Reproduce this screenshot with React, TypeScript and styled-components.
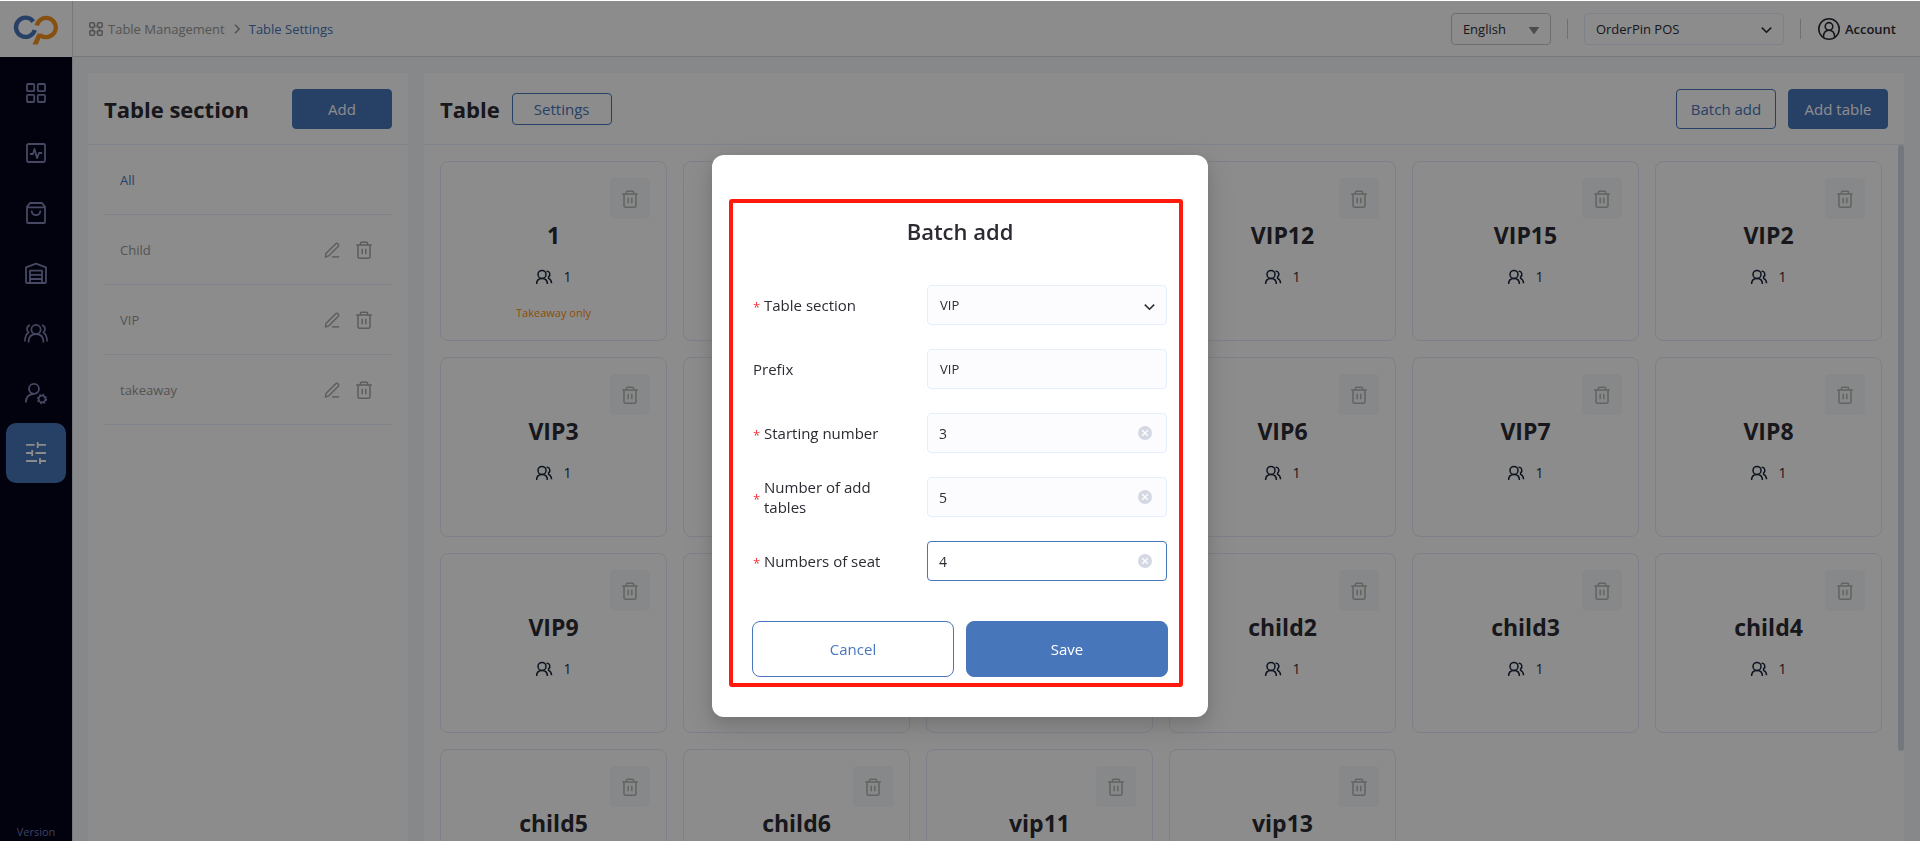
import React, { useState } from 'react';
import styled, { createGlobalStyle, css } from 'styled-components';

const color = {
  primary: '#4876bb',
  text: '#2b2b33',
  muted: '#999999',
  line: '#e6edfb',
  page: '#f5f7fa',
};

const GlobalStyle = createGlobalStyle`
  *, *::before, *::after { box-sizing: border-box; }
  body {
    margin: 0;
    overflow: hidden;
    font-family: "Open Sans", "Noto Sans", sans-serif;
    font-size: 13px;
    line-height: 20px;
    color: ${color.text};
    background: #fff;
  }
  button, input, select { font: inherit; color: inherit; margin: 0; }
  button { cursor: pointer; }
  svg { display: block; flex: none; }
  h1, h2, h3, p, ul { margin: 0; padding: 0; }
`;

/* ---------- Shell ---------- */

const Shell = styled.div`
  display: flex;
  height: 100vh;
  border-top: 1px solid #fff;
`;

const Sidebar = styled.nav`
  width: 72px;
  flex: none;
  display: flex;
  flex-direction: column;
  align-items: center;
  background: #04031a;
`;

const LogoBox = styled.a`
  width: 100%;
  height: 56px;
  display: flex;
  justify-content: center;
  padding-top: 14px;
  background: #fff;
  margin-bottom: 6px;
`;

const NavItem = styled.a<{ $active?: boolean }>`
  width: 60px;
  height: 60px;
  flex: none;
  display: flex;
  align-items: center;
  justify-content: center;
  border-radius: 10px;
  color: ${(p) => (p.$active ? '#fff' : '#8184b4')};
  background: ${(p) => (p.$active ? color.primary : 'transparent')};
`;

const Version = styled.span`
  margin-top: auto;
  font-size: 11px;
  line-height: 18px;
  color: #7077b0;
`;

const Body = styled.div`
  flex: 1;
  min-width: 0;
  display: flex;
  flex-direction: column;
  border-left: 1px solid #d5dae3;
  background: ${color.page};
`;

const Header = styled.header`
  height: 56px;
  flex: none;
  display: flex;
  align-items: center;
  justify-content: space-between;
  padding: 0 24px 0 15px;
  background: #fff;
  border-bottom: 1px solid #d5dae3;
`;

const Crumbs = styled.div`
  display: flex;
  align-items: center;
  gap: 4px;
  color: ${color.muted};
`;

const CrumbLink = styled.a<{ $current?: boolean }>`
  text-decoration: none;
  color: ${(p) => (p.$current ? color.primary : color.muted)};
`;

const HeaderTools = styled.div`
  display: flex;
  align-items: center;
  gap: 16px;
`;

const Separator = styled.span`
  width: 1px;
  height: 20px;
  background: #c9cdd6;
`;

const SelectWrap = styled.div<{ $width: number }>`
  width: ${(p) => p.$width}px;
  display: grid;
  align-items: center;
  > * { grid-area: 1 / 1; }
  > svg { justify-self: end; margin: 3px 12px 0 0; pointer-events: none; }
`;

const boxStyle = css`
  width: 100%;
  min-width: 0;
  border: 1px solid ${color.line};
  border-radius: 4px;
  padding: 0 12px;
  outline: none;
  appearance: none;
`;

const HeaderSelect = styled.select<{ $strong?: boolean }>`
  ${boxStyle}
  height: 32px;
  background: #fff;
  padding: 0 11px;
  border-color: ${(p) => (p.$strong ? '#c9c9cf' : color.line)};
`;

const AccountButton = styled.button`
  display: flex;
  align-items: center;
  gap: 4px;
  padding: 0;
  border: 0;
  background: none;
  font-weight: 600;
`;

/* ---------- Panels ---------- */

const Content = styled.main`
  flex: 1;
  min-height: 0;
  display: flex;
  gap: 16px;
  padding: 16px 16px 0 15px;
`;

const Panel = styled.section<{ $width?: number }>`
  ${(p) => (p.$width ? `flex: 0 0 ${p.$width}px;` : 'flex: 1; min-width: 0;')}
  display: flex;
  flex-direction: column;
  background: #fff;
`;

const PanelHead = styled.div`
  height: 72px;
  flex: none;
  display: flex;
  align-items: center;
  justify-content: space-between;
  gap: 12px;
  padding: 0 16px;
  border-bottom: 1px solid ${color.line};
`;

const PanelTitle = styled.h2`
  font-size: 22px;
  line-height: 32px;
  font-weight: 700;
`;

const Group = styled.div`
  display: flex;
  align-items: center;
  gap: 12px;
`;

const Button = styled.button<{ $outline?: boolean; $short?: boolean }>`
  width: 100px;
  height: ${(p) => (p.$short ? 32 : 40)}px;
  padding: 0;
  border: 1px solid ${color.primary};
  border-radius: 4px;
  font-size: 15px;
  white-space: nowrap;
  color: ${(p) => (p.$outline ? color.primary : '#fff')};
  background: ${(p) => (p.$outline ? '#fff' : color.primary)};
`;

const SectionList = styled.ul`
  list-style: none;
  padding: 0 16px;
`;

const SectionRow = styled.li<{ $active?: boolean }>`
  height: 70px;
  display: flex;
  align-items: center;
  padding: 0 19px 0 16px;
  border-bottom: 1px solid ${color.line};
  color: ${(p) => (p.$active ? color.primary : color.muted)};
`;

const SectionName = styled.span`
  flex: 1;
`;

const RowActions = styled.div`
  display: flex;
  align-items: center;
  gap: 15px;
`;

const IconButton = styled.button`
  display: flex;
  padding: 0;
  border: 0;
  background: none;
  color: #a8a8a8;
`;

const CardArea = styled.div`
  flex: 1;
  min-height: 0;
  display: flex;
`;

const CardScroll = styled.div`
  flex: 1;
  min-width: 0;
  overflow-y: auto;
  scrollbar-width: none;
  padding: 16px;
`;

const ScrollTrack = styled.div`
  width: 6px;
  flex: none;
`;

const ScrollThumb = styled.div`
  height: 87%;
  border-radius: 3px;
  background: #d3d9e3;
`;

const CardGrid = styled.div`
  display: grid;
  grid-template-columns: repeat(6, 1fr);
  gap: 16px;
`;

const Card = styled.article`
  height: 180px;
  display: flex;
  flex-direction: column;
  align-items: center;
  padding: 16px;
  border: 1px solid #e6e8f8;
  border-radius: 8px;
`;

const CardDelete = styled.button`
  align-self: flex-end;
  width: 40px;
  height: 41px;
  display: flex;
  align-items: center;
  justify-content: center;
  padding: 0;
  border: 0;
  border-radius: 4px;
  background: ${color.page};
  color: #b4b4b0;
`;

const CardName = styled.h3`
  font-size: 23px;
  line-height: 32px;
  font-weight: 700;
  margin-bottom: 16px;
`;

const Seats = styled.div`
  display: flex;
  align-items: center;
  gap: 10px;
  font-size: 14px;
  margin-bottom: 16px;
`;

const Note = styled.p`
  font-size: 11px;
  line-height: 20px;
  color: #ff8f0a;
`;

/* ---------- Dialog ---------- */

const Overlay = styled.div`
  position: fixed;
  inset: 1px 0 0 0;
  display: flex;
  align-items: flex-start;
  justify-content: center;
  padding-top: 154px;
  background: rgba(0, 0, 0, 0.45);
`;

const Dialog = styled.form`
  position: relative;
  width: 496px;
  padding: 60px 40px 40px;
  border-radius: 12px;
  background: #fff;
  box-shadow: 0 6px 16px rgba(0, 0, 0, 0.12), 0 9px 28px 8px rgba(0, 0, 0, 0.08);
`;

const Highlight = styled.div`
  position: absolute;
  inset: 44px 25px 30px 17px;
  border: 4px solid #ff1a0d;
  border-radius: 3px;
  pointer-events: none;
`;

const DialogTitle = styled.h1`
  font-size: 22px;
  line-height: 32px;
  font-weight: 600;
  text-align: center;
  margin-bottom: 38px;
`;

const Fields = styled.div`
  display: flex;
  flex-direction: column;
  gap: 24px;
  padding: 0 1px;
  margin-bottom: 40px;
`;

const Field = styled.div`
  display: flex;
  align-items: center;
  justify-content: space-between;
  height: 40px;
`;

const FieldLabel = styled.label`
  width: 136px;
  display: flex;
  align-items: center;
  gap: 5px;
  font-size: 15px;
`;

const Star = styled.span`
  width: 6px;
  font-size: 13px;
  line-height: 16px;
  padding-top: 3px;
  color: #f5303a;
`;

const FieldSelect = styled.select`
  ${boxStyle}
  height: 40px;
  background: #fcfcfe;
`;

const FieldInput = styled.input<{ $focused?: boolean; $number?: boolean }>`
  ${boxStyle}
  height: 40px;
  ${(p) => p.$number && 'padding: 0 11px; font-size: 14px;'}
  background: ${(p) => (p.$focused ? '#fff' : '#fcfcfe')};
  border-color: ${(p) => (p.$focused ? color.primary : color.line)};
`;

const InputWrap = styled.div`
  width: 240px;
  display: grid;
  align-items: center;
  > * { grid-area: 1 / 1; }
`;

const ClearButton = styled.button`
  justify-self: end;
  display: flex;
  margin-right: 15px;
  padding: 0;
  border: 0;
  background: none;
`;

const DialogActions = styled.div`
  display: flex;
  gap: 12px;
`;

const DialogButton = styled(Button)`
  flex: 1;
  height: 56px;
  border-radius: 8px;
`;

/* ---------- Icons ---------- */

const Line: React.FC<{ size?: number; box?: string; width?: number; children: React.ReactNode }> = ({
  size = 24,
  box = '0 0 24 24',
  width = 1.8,
  children,
}) => (
  <svg
    width={size}
    height={size}
    viewBox={box}
    fill="none"
    stroke="currentColor"
    strokeWidth={width}
    strokeLinejoin="round"
    aria-hidden
  >
    {children}
  </svg>
);

const Logo = () => (
  <svg width="46" height="32" viewBox="0 0 46 32" fill="none" aria-hidden>
    <path d="M20.3 6.6A9.6 9.6 0 1 0 21.8 15" stroke={color.primary} strokeWidth="4.3" />
    <path d="M23.8 10.4A9.6 9.6 0 1 1 27.6 20.4" stroke="#f7931e" strokeWidth="4.3" />
    <path d="M24.6 18.6L29.4 18.8L27.6 23L24.8 29.6H19.400Z" fill="#f7931e" />
  </svg>
);

const GridIcon = () => (
  <Line>
    <rect x="3" y="3" width="7.2" height="7.2" rx="1" />
    <rect x="13.8" y="3" width="7.2" height="7.2" rx="1" />
    <rect x="3" y="13.8" width="7.2" height="7.2" rx="1" />
    <rect x="13.8" y="13.8" width="7.2" height="7.2" rx="1" />
  </Line>
);

const ActivityIcon = () => (
  <Line>
    <rect x="3" y="3" width="18" height="18" rx="1.5" />
    <path d="M6 13h3l1.5-5 2.6 9.2L15 12h3" />
  </Line>
);

const BagIcon = () => (
  <Line>
    <path d="M3 5.6L6 2h12l3 3.6V21a1 1 0 0 1-1 1H4a1 1 0 0 1-1-1zM3 6.4h18" />
    <path d="M7.6 9.6c0 6 8.8 6 8.8 0" />
  </Line>
);

const StoreIcon = () => (
  <Line>
    <path d="M2 6.4L12 2.6l10 3.8V21a1 1 0 0 1-1 1H3a1 1 0 0 1-1-1z" />
    <path d="M6 22V9.6h12V22M6 13.8h12M6 18h12" />
  </Line>
);

const PeopleIcon = () => (
  <Line width={1.7}>
    <circle cx="12" cy="8.5" r="4.6" />
    <path d="M4.4 21.5c0-5.4 3-8.4 7.6-8.4s7.6 3 7.6 8.4" />
    <path d="M6 4c-2 .6-3 2-3 4 0 1.6.6 2.6 1.6 3.4C1.6 13 .9 16 .9 20.6M18 4c2 .6 3 2 3 4 0 1.6-.6 2.6-1.6 3.4 3 1.6 3.7 4.6 3.7 9.2" />
  </Line>
);

const UserGearIcon = () => (
  <Line>
    <circle cx="10" cy="7.8" r="5" />
    <path d="M1.8 21.6c0-5 3-8.4 8-8.8" />
    <circle cx="18" cy="18" r="3.4" />
    <circle cx="18" cy="18" r="4.6" strokeWidth="1.2" strokeDasharray="1.8 1.812" />
  </Line>
);

const SlidersIcon = () => (
  <Line>
    <path d="M2 3.9h8.6M13.700 3.900H22M13.700 1v6M2 12h6.200M11.500 12H22M8.200 9v6M2 20h11M16 20h6M16 17v6" />
  </Line>
);

const CrumbIcon = () => (
  <Line size={16} box="0 0 16 16" width={1.6}>
    <rect x="1.8" y="1.8" width="4.6" height="4.6" rx="1" />
    <rect x="9.6" y="1.8" width="4.6" height="4.6" rx="1" />
    <rect x="1.8" y="9.6" width="4.6" height="4.6" rx="1" />
    <rect x="9.6" y="9.6" width="4.6" height="4.6" rx="1" />
    <path d="M4.600 6.500v3M11.400 6.500v3M6.400 5h3.200M6.400 11h3.200" strokeWidth="1" />
  </Line>
);

const CrumbArrow = () => (
  <Line size={16} box="0 0 16 16" width={1.6}>
    <path d="M6 3.8L10.2 8 6 12.2" />
  </Line>
);

const Chevron = () => (
  <svg width="11" height="8" viewBox="0 0 11 8" fill="none" stroke="#2b2b33" strokeWidth="1.6" aria-hidden>
    <path d="M.8 1.600l4.700 4.600 4.700-4.600" />
  </svg>
);

const Caret = () => (
  <svg width="10" height="7" viewBox="0 0 10 7" aria-hidden>
    <path d="M0 0h10L5 7z" fill="#8a8a8a" stroke="#8a8a8a" strokeWidth=".6" />
  </svg>
);

const PencilIcon = () => (
  <Line size={16} box="0 0 16 16" width={1.4}>
    <path d="M1.4 15l.5-3.4L11.8 1.700a1.800 1.800 0 0 1 2.500 2.500L4.600 13.900z" />
    <path d="M8 14.900h7.200" />
  </Line>
);

const TrashIcon = () => (
  <Line size={18} box="0 0 18 18" width={1.5}>
    <path d="M1.200 4h15.600M5.400 4V2.400a1.200 1.200 0 0 1 1.200-1.200h4.800a1.200 1.200 0 0 1 1.200 1.200V4" />
    <path d="M3 4v11.800a1.400 1.400 0 0 0 1.400 1.400h9.200a1.400 1.400 0 0 0 1.400-1.400V4" />
    <path d="M7.200 7.800v5.400M10.800 7.800v5.400" />
  </Line>
);

const SeatIcon = () => (
  <svg width="18" height="16" viewBox="0 0 18 16" fill="none" stroke="#17243a" strokeWidth="1.5" aria-hidden>
    <circle cx="7" cy="5.400" r="4" />
    <path d="M1.600 15c0-3.400 2-5.600 5.400-5.600s5.400 2.200 5.400 5.600M11.600 2.400c3.400-.4 4.200 3.800 2 5.400v1.600c2 .8 2.800 2.800 3 4.800" />
  </svg>
);

const AccountIcon = () => (
  <Line width={1.6}>
    <circle cx="12" cy="12" r="10.200" />
    <circle cx="12" cy="9.400" r="3.800" />
    <path d="M6.400 20c0-4 2-6.800 5.600-6.800s5.600 2.800 5.600 6.800" />
  </Line>
);

const ClearIcon = () => (
  <svg width="14" height="14" viewBox="0 0 14 14" aria-hidden>
    <circle cx="7" cy="7" r="7" fill="#d3d8e2" />
    <path d="M4.200 4.200l5.600 5.600M9.800 4.200L4.200 9.800" stroke="#fff" strokeWidth="1.300" />
  </svg>
);

/* ---------- Data ---------- */

const navItems = [
  { name: 'Dashboard', Icon: GridIcon },
  { name: 'Reports', Icon: ActivityIcon },
  { name: 'Orders', Icon: BagIcon },
  { name: 'Store', Icon: StoreIcon },
  { name: 'Customers', Icon: PeopleIcon },
  { name: 'Staff', Icon: UserGearIcon },
  { name: 'Settings', Icon: SlidersIcon, active: true },
];

const sections = ['Child', 'VIP', 'takeaway'];

const tables: { name: string; seats: number; note?: string }[] = [
  { name: '1', seats: 1, note: 'Takeaway only' },
  ...[
    'VIP1', 'VIP10', 'VIP12', 'VIP15', 'VIP2',
    'VIP3', 'VIP4', 'VIP5', 'VIP6', 'VIP7', 'VIP8',
    'VIP9', 'child', 'child1', 'child2', 'child3', 'child4',
    'child5', 'child6', 'vip11', 'vip13',
  ].map((name) => ({ name, seats: 1 })),
];

const numberFields = [
  { id: 'start', label: 'Starting number', value: '3' },
  { id: 'count', label: 'Number of add tables', value: '5' },
  { id: 'seats', label: 'Numbers of seat', value: '4', focused: true },
];

/* ---------- Parts ---------- */

const NumberField: React.FC<{ id: string; label: string; value: string; focused?: boolean }> = ({
  id,
  label,
  value: initial,
  focused,
}) => {
  const [value, setValue] = useState(initial);
  return (
    <Field>
      <FieldLabel htmlFor={id}>
        <Star>*</Star>
        <span>{label}</span>
      </FieldLabel>
      <InputWrap>
        <FieldInput
          id={id}
          $number
          $focused={focused}
          value={value}
          onChange={(e) => setValue(e.target.value)}
        />
        <ClearButton type="button" aria-label={`Clear ${label}`} onClick={() => setValue('')}>
          <ClearIcon />
        </ClearButton>
      </InputWrap>
    </Field>
  );
};

const BatchAddDialog = () => {
  const [prefix, setPrefix] = useState('VIP');
  return (
    <Overlay>
      <Dialog role="dialog" aria-labelledby="batch-title" onSubmit={(e) => e.preventDefault()}>
        <DialogTitle id="batch-title">Batch add</DialogTitle>
        <Fields>
          <Field>
            <FieldLabel htmlFor="section">
              <Star>*</Star>
              <span>Table section</span>
            </FieldLabel>
            <SelectWrap $width={240}>
              <FieldSelect id="section" defaultValue="VIP">
                {sections.map((s) => (
                  <option key={s}>{s}</option>
                ))}
              </FieldSelect>
              <Chevron />
            </SelectWrap>
          </Field>
          <Field>
            <FieldLabel htmlFor="prefix">Prefix</FieldLabel>
            <InputWrap>
              <FieldInput id="prefix" value={prefix} onChange={(e) => setPrefix(e.target.value)} />
            </InputWrap>
          </Field>
          {numberFields.map((f) => (
            <NumberField key={f.id} {...f} />
          ))}
        </Fields>
        <DialogActions>
          <DialogButton type="button" $outline>Cancel</DialogButton>
          <DialogButton type="submit">Save</DialogButton>
        </DialogActions>
        <Highlight />
      </Dialog>
    </Overlay>
  );
};

export default function App() {
  return (
    <>
      <GlobalStyle />
      <Shell>
        <Sidebar>
          <LogoBox href="#" aria-label="OrderPin">
            <Logo />
          </LogoBox>
          {navItems.map(({ name, Icon, active }) => (
            <NavItem key={name} href="#" aria-label={name} $active={active}>
              <Icon />
            </NavItem>
          ))}
          <Version>Version</Version>
        </Sidebar>
        <Body>
          <Header>
            <Crumbs>
              <CrumbIcon />
              <CrumbLink href="#">Table Management</CrumbLink>
              <CrumbArrow />
              <CrumbLink href="#" $current>Table Settings</CrumbLink>
            </Crumbs>
            <HeaderTools>
              <SelectWrap $width={100}>
                <HeaderSelect aria-label="Language" $strong>
                  <option>English</option>
                </HeaderSelect>
                <Caret />
              </SelectWrap>
              <Separator />
              <SelectWrap $width={200}>
                <HeaderSelect aria-label="Store">
                  <option>OrderPin POS</option>
                </HeaderSelect>
                <Chevron />
              </SelectWrap>
              <Separator />
              <AccountButton type="button">
                <AccountIcon />
                Account
              </AccountButton>
            </HeaderTools>
          </Header>
          <Content>
            <Panel $width={320}>
              <PanelHead>
                <PanelTitle>Table section</PanelTitle>
                <Button type="button">Add</Button>
              </PanelHead>
              <SectionList>
                <SectionRow $active>
                  <SectionName>All</SectionName>
                </SectionRow>
                {sections.map((name) => (
                  <SectionRow key={name}>
                    <SectionName>{name}</SectionName>
                    <RowActions>
                      <IconButton type="button" aria-label={`Edit ${name}`}>
                        <PencilIcon />
                      </IconButton>
                      <IconButton type="button" aria-label={`Delete ${name}`}>
                        <TrashIcon />
                      </IconButton>
                    </RowActions>
                  </SectionRow>
                ))}
              </SectionList>
            </Panel>
            <Panel>
              <PanelHead>
                <Group>
                  <PanelTitle>Table</PanelTitle>
                  <Button type="button" $outline $short>Settings</Button>
                </Group>
                <Group>
                  <Button type="button" $outline>Batch add</Button>
                  <Button type="button">Add table</Button>
                </Group>
              </PanelHead>
              <CardArea>
                <CardScroll>
                  <CardGrid>
                    {tables.map((t) => (
                      <Card key={t.name}>
                        <CardDelete type="button" aria-label={`Delete table ${t.name}`}>
                          <TrashIcon />
                        </CardDelete>
                        <CardName>{t.name}</CardName>
                        <Seats>
                          <SeatIcon />
                          {t.seats}
                        </Seats>
                        {t.note && <Note>{t.note}</Note>}
                      </Card>
                    ))}
                  </CardGrid>
                </CardScroll>
                <ScrollTrack>
                  <ScrollThumb />
                </ScrollTrack>
              </CardArea>
            </Panel>
          </Content>
        </Body>
      </Shell>
      <BatchAddDialog />
    </>
  );
}
